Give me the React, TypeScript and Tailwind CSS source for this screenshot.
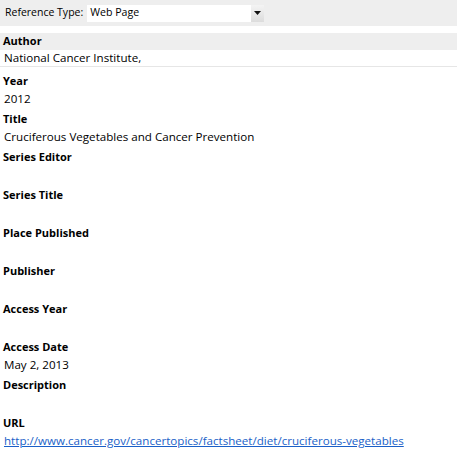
import React from "react";

type Field = { label: string; value?: string; link?: boolean };

const fields: Field[] = [
  { label: "Year", value: "2012" },
  { label: "Title", value: "Cruciferous Vegetables and Cancer Prevention" },
  { label: "Series Editor" },
  { label: "Series Title" },
  { label: "Place Published" },
  { label: "Publisher" },
  { label: "Access Year" },
  { label: "Access Date", value: "May 2, 2013" },
  { label: "Description" },
  { label: "URL", value: "http://www.cancer.gov/cancertopics/factsheet/diet/cruciferous-vegetables", link: true },
];

export default function App() {
  return (
    <div className="h-[453px] w-[457px] overflow-hidden bg-white font-['Open_Sans',sans-serif] text-[11.6px] text-black">
      {/* reference type bar */}
      <div className="flex h-[26px] items-center bg-[#eeeeee] pl-[5px]">
        <span className="mr-[4px] text-[10.5px]">Reference Type:</span>
        <div className="flex h-[17px] w-[177px] items-center bg-white pl-[3px]">
          <span className="flex-1 text-[10.6px]">Web Page</span>
          <div className="flex h-[17px] w-[13px] items-center justify-center bg-gradient-to-b from-[#f4f4f4] to-[#dcdcdc]">
            <svg width="7" height="5" viewBox="0 0 7 5">
              <path d="M0 0h7L3.5 4z" fill="#111" />
            </svg>
          </div>
        </div>
      </div>

      <div className="h-[7px]" />

      {/* author */}
      <div className="flex h-[17px] items-center bg-[#eeeeee] pl-[3px] text-[11px] font-bold">Author</div>
      <div className="flex h-[17px] items-center border-b border-[#e6e6e6] pl-[4px]">National Cancer Institute,</div>

      <div className="pt-[5px]">
        {fields.map((f) => (
          <div key={f.label} className="h-[38px]">
            <div className="flex h-[18px] items-center pl-[3px] text-[11px] font-bold">{f.label}</div>
            {f.value && (
              <div className="flex h-[18px] items-center pl-[4px]">
                {f.link ? (
                  <a href="#" className="text-[#1a5fc8] underline">{f.value}</a>
                ) : (
                  f.value
                )}
              </div>
            )}
          </div>
        ))}
      </div>
    </div>
  );
}
